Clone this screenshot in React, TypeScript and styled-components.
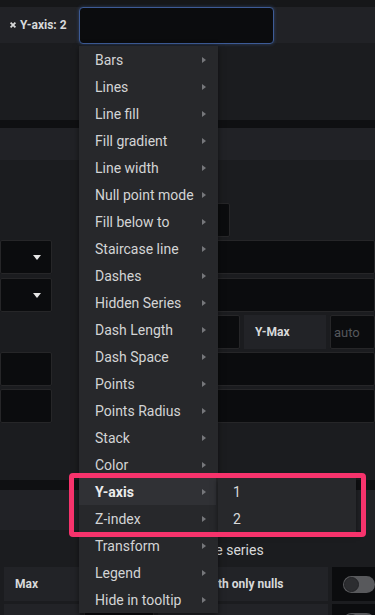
// @ts-nocheck
import React from "react"
import styled, { createGlobalStyle } from "styled-components"

const menuItems = [
  "Bars",
  "Lines",
  "Line fill",
  "Fill gradient",
  "Line width",
  "Null point mode",
  "Fill below to",
  "Staircase line",
  "Dashes",
  "Hidden Series",
  "Dash Length",
  "Dash Space",
  "Points",
  "Points Radius",
  "Stack",
  "Color",
  "Y-axis",
  "Z-index",
  "Transform",
  "Legend",
  "Hide in tooltip"
]

const App = () => {
  return (
    <Page>
      <GlobalStyle />
      <TopStrip />
      <OverrideBar>
        <OverrideTag>
          <CloseIcon viewBox="0 0 10 10">
            <path d="M2 2 L8 8 M8 2 L2 8" />
          </CloseIcon>
          Y-axis: 2
        </OverrideTag>
        <SearchInput />
      </OverrideBar>
      <Body height={77} />
      <Gap />
      <SectionHeader />
      <Body height={320}>
        <FormRow top={43}>
          <Spacer width={86} />
          <Input width={140} />
        </FormRow>
        <FormRow top={3}>
          <Select />
          <Spacer width={26} />
          <Input grow />
        </FormRow>
        <FormRow top={4}>
          <Select />
          <Spacer width={26} />
          <Input grow />
        </FormRow>
        <FormRow top={3}>
          <Spacer width={86} />
          <Input width={150} />
          <Label width={82}>Y-Max</Label>
          <Input grow>
            <Placeholder>auto</Placeholder>
          </Input>
        </FormRow>
        <FormRow top={3}>
          <Input width={52} />
          <Spacer width={26} />
          <Input grow />
        </FormRow>
        <FormRow top={3}>
          <Input width={52} />
          <Spacer width={26} />
          <Input grow />
        </FormRow>
      </Body>
      <Gap height={10} />
      <SectionHeader height={40} />
      <Body height={120}>
        <SwitchCaption>Hide series</SwitchCaption>
        <FormRow top={8}>
          <Spacer width={0} />
          <Label width={76}>Max</Label>
          <Input width={70} />
          <Label grow>Series with only nulls</Label>
          <SwitchField>
            <Toggle>
              <Knob />
            </Toggle>
          </SwitchField>
        </FormRow>
        <FormRow top={3}>
          <Spacer width={0} />
          <Label width={76} />
          <Input width={70} />
          <Label grow />
          <SwitchField>
            <Toggle>
              <Knob />
            </Toggle>
          </SwitchField>
        </FormRow>
      </Body>

      <Menu>
        {menuItems.map((item) => (
          <MenuItem key={item} active={item === "Y-axis"}>
            <span>{item}</span>
            <Caret />
          </MenuItem>
        ))}
        <SubMenu>
          <SubItem>1</SubItem>
          <SubItem>2</SubItem>
        </SubMenu>
      </Menu>
      <Highlight />
    </Page>
  )
}

const GlobalStyle = createGlobalStyle`
  html, body {
    margin: 0;
    padding: 0;
    background: #1b1c1f;
    font-family: Roboto, "Liberation Sans", sans-serif;
  }
`

const Page = styled.div`
  position: relative;
  width: 375px;
  height: 615px;
  overflow: hidden;
  background: #1b1c1f;
`

const TopStrip = styled.div`
  height: 7px;
  background: #161719;
`

const OverrideBar = styled.div`
  display: flex;
  align-items: center;
  height: 36px;
  background: #212226;
`

const OverrideTag = styled.div`
  display: flex;
  align-items: center;
  gap: 3px;
  width: 70px;
  padding-left: 9px;
  font-size: 12px;
  font-weight: 700;
  color: #d8d9da;
`

const CloseIcon = styled.svg`
  width: 8px;
  height: 8px;
  stroke: #d8d9da;
  stroke-width: 2.2;
  fill: none;
`

const SearchInput = styled.div`
  box-sizing: border-box;
  width: 195px;
  height: 37px;
  margin-top: 1px;
  background: #0b0c0e;
  border: 1.5px solid #3d5b96;
  border-radius: 4px;
  box-shadow: 0 0 3px 1px rgba(61, 91, 150, 0.35);
`

const Body = styled.div`
  display: flex;
  flex-direction: column;
  height: ${(p) => p.height}px;
  background: #1b1c1f;
`

const Gap = styled.div`
  height: ${(p) => p.height || 8}px;
  background: #0f1012;
`

const SectionHeader = styled.div`
  height: ${(p) => p.height || 32}px;
  background: #212226;
`

const FormRow = styled.div`
  display: flex;
  gap: 4px;
  height: 34px;
  margin-top: ${(p) => p.top}px;
`

const Spacer = styled.div`
  width: ${(p) => p.width}px;
  flex-shrink: 0;
`

const Input = styled.div`
  box-sizing: border-box;
  display: flex;
  align-items: center;
  flex: ${(p) => (p.grow ? "1" : "none")};
  width: ${(p) => (p.width ? p.width + "px" : "auto")};
  background: #0b0c0e;
  border: 1px solid #262628;
  border-radius: 2px;
`

const Select = styled(Input)`
  width: 52px;
  flex: none;
  justify-content: flex-end;
  padding-right: 10px;
  &::after {
    content: "";
    border-left: 4px solid transparent;
    border-right: 4px solid transparent;
    border-top: 5px solid #e6e6e6;
  }
`

const Label = styled.div`
  box-sizing: border-box;
  display: flex;
  align-items: center;
  flex: ${(p) => (p.grow ? "1" : "none")};
  width: ${(p) => (p.width ? p.width + "px" : "auto")};
  padding-left: 11px;
  background: #222327;
  font-size: 12px;
  font-weight: 700;
  color: #d8d9da;
  white-space: nowrap;
  overflow: hidden;
`

const Placeholder = styled.span`
  padding-left: 3px;
  font-size: 13px;
  color: #55575c;
`

const SwitchCaption = styled.div`
  margin-top: 12px;
  padding-left: 194px;
  height: 17px;
  font-size: 14px;
  color: #d8d9da;
`

const SwitchField = styled.div`
  display: flex;
  align-items: center;
  width: 43px;
  padding-left: 11px;
  box-sizing: border-box;
  background: #0b0c0e;
`

const Toggle = styled.div`
  display: flex;
  align-items: center;
  width: 40px;
  height: 17px;
  padding-left: 1px;
  border-radius: 9px;
  background: #58595c;
`

const Knob = styled.div`
  box-sizing: border-box;
  width: 15px;
  height: 15px;
  border-radius: 50%;
  background: #2c2d30;
  border: 1px solid #222326;
`

const Menu = styled.div`
  position: absolute;
  left: 79px;
  top: 46px;
  width: 139px;
  background: #27282b;
  box-shadow: 0 2px 6px rgba(0, 0, 0, 0.5);
`

const MenuItem = styled.div`
  display: flex;
  align-items: center;
  justify-content: space-between;
  height: 27px;
  padding: 0 10px 0 16px;
  margin-right: 2px;
  font-size: 14px;
  font-weight: ${(p) => (p.active ? 700 : 400)};
  color: ${(p) => (p.active ? "#ececec" : "#d3d4d5")};
  background: ${(p) => (p.active ? "#303135" : "transparent")};
`

const Caret = styled.span`
  border-top: 3px solid transparent;
  border-bottom: 3px solid transparent;
  border-left: 4px solid #76777b;
`

const SubMenu = styled.div`
  position: absolute;
  left: 139px;
  top: 432px;
  width: 138px;
  background: #27282b;
  box-shadow: 0 2px 6px rgba(0, 0, 0, 0.5);
`

const SubItem = styled.div`
  display: flex;
  align-items: center;
  height: 27px;
  padding-left: 15px;
  font-size: 14px;
  color: #d8d9da;
`

const Highlight = styled.div`
  position: absolute;
  left: 69px;
  top: 473px;
  width: 297px;
  height: 64px;
  box-sizing: border-box;
  border: 5px solid #f7336c;
  border-radius: 4px;
`

export default App
